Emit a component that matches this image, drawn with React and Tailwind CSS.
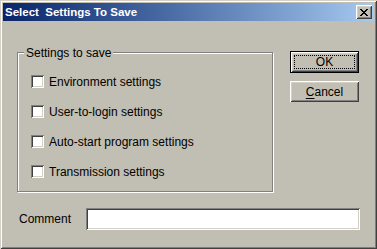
import React from "react";

const face = "bg-[#c1beb3]";

const Checkbox = () => (
  <span className="block w-[13px] h-[13px] shrink-0 bg-white shadow-[inset_1px_1px_0_#808080,inset_-1px_-1px_0_#ffffff,inset_2px_2px_0_#404040,inset_-2px_-2px_0_#d4d0c8]" />
);

const options = [
  "Environment settings",
  "User-to-login settings",
  "Auto-start program settings",
  "Transmission settings",
];

const App = () => {
  return (
    <div
      className={`w-[377px] h-[249px] ${face} p-[3px] font-['Liberation_Sans',Arial,sans-serif] text-black shadow-[inset_1px_1px_0_#d4d0c8,inset_-1px_-1px_0_#404040,inset_2px_2px_0_#ffffff,inset_-2px_-2px_0_#808080]`}
    >
      {/* Title bar */}
      <div className="h-[18px] flex items-center justify-between pl-[2px] pr-[2px] bg-linear-to-r from-[#0a246a] to-[#a6caf0]">
        <span className="text-white font-bold text-[11.5px] leading-[14px] whitespace-pre">
          Select  Settings To Save
        </span>
        <span
          className={`w-[16px] h-[14px] ${face} flex items-center justify-center shadow-[inset_1px_1px_0_#ffffff,inset_-1px_-1px_0_#404040,inset_2px_2px_0_#d4d0c8,inset_-2px_-2px_0_#808080]`}
        >
          <svg width="8" height="7" viewBox="0 0 8 7" shapeRendering="crispEdges">
            <path
              d="M0 0h2v1H0zM6 0h2v1H6zM1 1h2v1H1zM5 1h2v1H5zM2 2h4v1H2zM3 3h2v1H3zM2 4h4v1H2zM1 5h2v1H1zM5 5h2v1H5zM0 6h2v1H0zM6 6h2v1H6z"
              fill="#000"
            />
          </svg>
        </span>
      </div>

      {/* Body */}
      <div className="pl-[14px] pt-[31px]">
        <div className="flex items-start">
          {/* Group box */}
          <div className="relative w-[256px] h-[140px] border border-[#808080] shadow-[inset_1px_1px_0_#ffffff,1px_1px_0_#ffffff]">
            <span className={`absolute left-[6px] -top-[7px] px-[2px] ${face} text-[12px] leading-[14px]`}>
              Settings to save
            </span>
            <div className="flex flex-col gap-[17px] pt-[22px] pl-[13px]">
              {options.map((label) => (
                <label key={label} className="flex items-center h-[13px]">
                  <Checkbox />
                  <span className="ml-[5px] text-[12px] leading-[14px] whitespace-nowrap">{label}</span>
                </label>
              ))}
            </div>
          </div>

          {/* Buttons */}
          <div className="flex flex-col gap-[8px] ml-[17px] -mt-[1px]">
            <button
              className={`relative w-[69px] h-[22px] ${face} border border-black text-[12px] leading-[14px] shadow-[inset_1px_1px_0_#ffffff,inset_-1px_-1px_0_#404040,inset_2px_2px_0_#d4d0c8,inset_-2px_-2px_0_#808080]`}
            >
              <span className="absolute inset-[3px] border border-dotted border-black" />
              OK
            </button>
            <button
              className={`w-[69px] h-[21px] ${face} text-[12px] leading-[14px] shadow-[inset_1px_1px_0_#ffffff,inset_-1px_-1px_0_#404040,inset_2px_2px_0_#d4d0c8,inset_-2px_-2px_0_#808080]`}
            >
              <span className="underline underline-offset-2">C</span>ancel
            </button>
          </div>
        </div>

        {/* Comment */}
        <div className="flex items-center mt-[16px] ml-[2px]">
          <span className="w-[67px] text-[12px] leading-[14px]">Comment</span>
          <input
            type="text"
            className="w-[274px] h-[22px] bg-white outline-none px-[4px] text-[12px] shadow-[inset_1px_1px_0_#808080,inset_-1px_-1px_0_#ffffff,inset_2px_2px_0_#404040,inset_-2px_-2px_0_#d4d0c8]"
          />
        </div>
      </div>
    </div>
  );
};

export default App;
